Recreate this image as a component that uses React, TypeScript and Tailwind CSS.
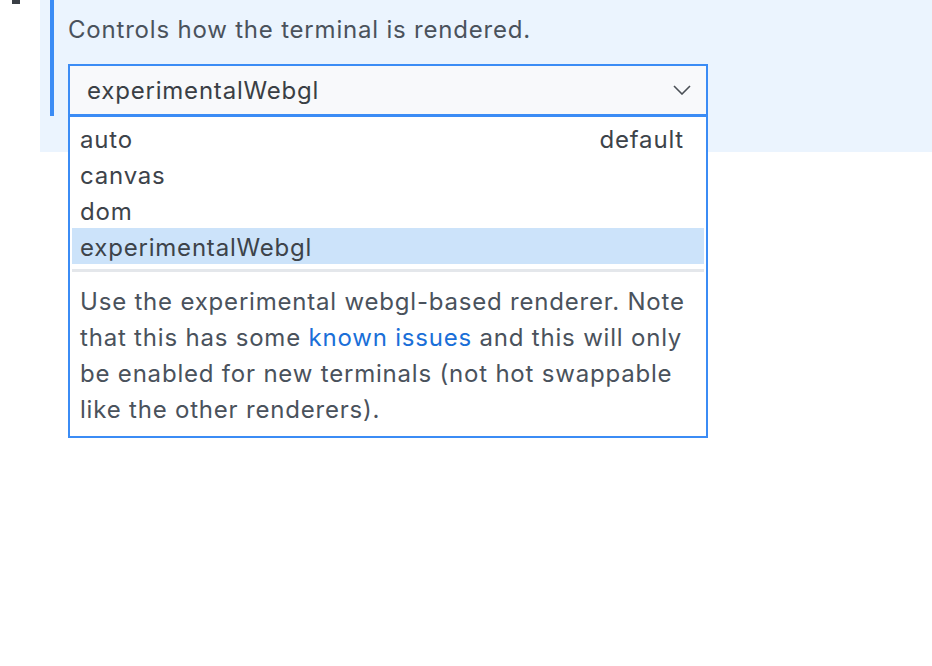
import React from "react";

const font = { fontFamily: "Inter, 'Noto Sans', sans-serif" };

export default function App() {
  const options = ["auto", "canvas", "dom", "experimentalWebgl"];
  return (
    <div className="w-[932px] h-[666px] bg-white overflow-hidden relative tracking-[0.8px]" style={font}>
      <div className="flex">
        <div className="w-[40px] shrink-0 relative">
          <div className="absolute left-[12px] top-0 w-[8px] h-[4px] bg-[#3a3f45]" />
        </div>
        <div className="flex-1 h-[152px] bg-[#ebf4fe] flex pl-[10px]">
          <div className="w-[4px] h-[116px] bg-[#3b8cf5] shrink-0" />
          <div className="ml-[14px] flex flex-col">
            <div className="pt-[12px] text-[24px] leading-[36px] text-[#4a525c]">
              Controls how the terminal is rendered.
            </div>
            <div className="relative mt-[16px] w-[640px]">
              <div className="h-[52px] border-2 border-[#3b8cf5] bg-[#f8f9fb] flex items-center justify-between pl-[17px] pr-[15px]">
                <span className="text-[24px] text-[#3a3f45] leading-[36px] pt-[2px]">experimentalWebgl</span>
                <svg width="18" height="10" viewBox="0 0 18 10" fill="none">
                  <path d="M1 1 L9 9 L17 1" stroke="#4a4f55" strokeWidth="1.6" />
                </svg>
              </div>
              <div className="absolute left-0 top-[51px] w-[640px] border-2 border-[#3b8cf5] bg-white px-[2px] pt-[3px]">
                {options.map((o) => (
                  <div
                    key={o}
                    className={
                      "h-[36px] flex items-center justify-between pl-[8px] pr-[20px] pt-[3px] text-[24px] text-[#3d434a] " +
                      (o === "experimentalWebgl" ? "bg-[#cce3fa]" : "")
                    }
                  >
                    <span>{o}</span>
                    {o === "auto" ? <span>default</span> : null}
                  </div>
                ))}
                <div className="mt-[5px] h-[3px] bg-[#e4e7eb]" />
                <div className="pt-[12px] pb-[8px] pl-[8px] pr-[8px] text-[24px] leading-[36px] text-[#4a525c]">
                  Use the experimental webgl-based renderer. Note that this has some{" "}
                  <span className="text-[#1a6fd8]">known issues</span> and this will only be enabled for new
                  terminals (not hot swappable like the other renderers).
                </div>
              </div>
            </div>
          </div>
        </div>
      </div>
    </div>
  );
}
